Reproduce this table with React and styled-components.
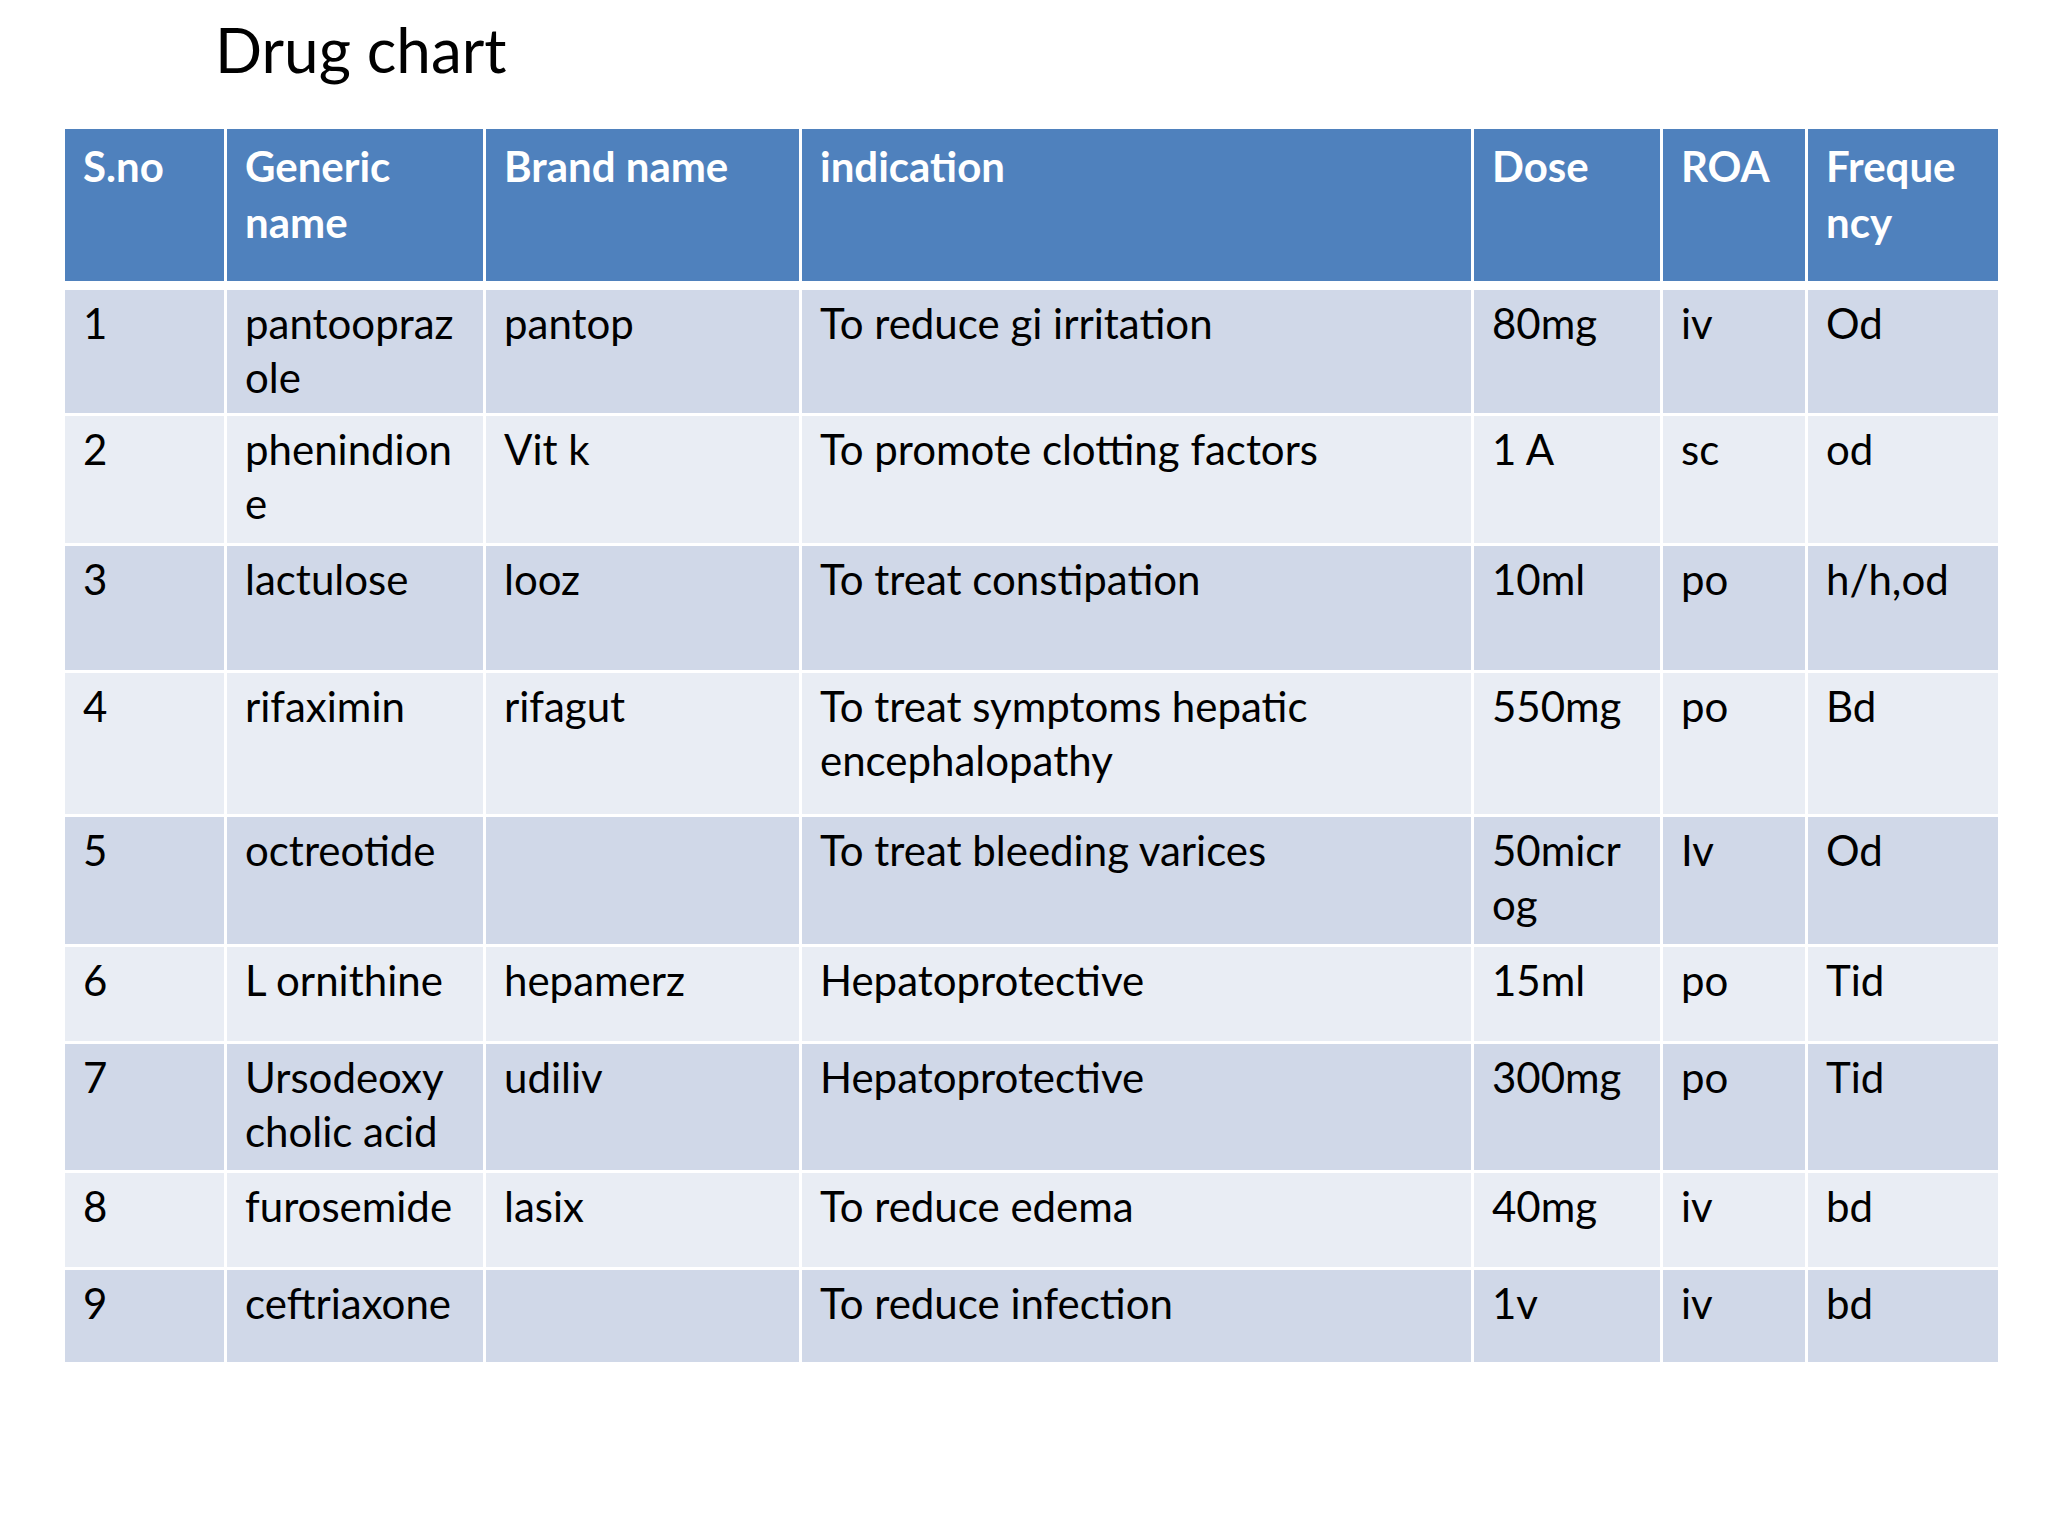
import React from "react";
import styled, { createGlobalStyle } from "styled-components";

const GlobalStyle = createGlobalStyle`
  body {
    margin: 0;
    background: #ffffff;
    font-family: Lato, "Open Sans", "Liberation Sans", sans-serif;
  }
`;

const columns = [
  { title: ["S.no"], width: 159 },
  { title: ["Generic", "name"], width: 256 },
  { title: ["Brand name"], width: 313 },
  { title: ["indication"], width: 669 },
  { title: ["Dose"], width: 186 },
  { title: ["ROA"], width: 142 },
  { title: ["Freque", "ncy"], width: 190 },
];

const rows = [
  { h: 123, cells: ["1", ["pantoopraz", "ole"], "pantop", "To reduce gi irritation", "80mg", "iv", "Od"] },
  { h: 127, cells: ["2", ["phenindion", "e"], "Vit k", "To promote clotting factors", "1 A", "sc", "od"] },
  { h: 124, cells: ["3", "lactulose", "looz", "To treat constipation", "10ml", "po", "h/h,od"] },
  { h: 141, cells: ["4", "rifaximin", "rifagut", ["To treat symptoms hepatic", "encephalopathy"], "550mg", "po", "Bd"] },
  { h: 127, cells: ["5", "octreotide", "", "To treat bleeding varices", ["50micr", "og"], "Iv", "Od"] },
  { h: 94, cells: ["6", "L ornithine", "hepamerz", "Hepatoprotective", "15ml", "po", "Tid"] },
  { h: 126, cells: ["7", ["Ursodeoxy", "cholic acid"], "udiliv", "Hepatoprotective", "300mg", "po", "Tid"] },
  { h: 94, cells: ["8", "furosemide", "lasix", "To reduce edema", "40mg", "iv", "bd"] },
  { h: 92, cells: ["9", "ceftriaxone", "", "To reduce infection", "1v", "iv", "bd"] },
];

const gridCols = columns.map((c) => `${c.width}px`).join(" ");

const Page = styled.div`
  padding: 12px 0 0 65px;
  width: 1933px;
`;

const Title = styled.h1`
  margin: 0 0 43px 150px;
  font-size: 62px;
  line-height: 74px;
  font-weight: 400;
  color: #000;
`;

const Table = styled.div`
  display: flex;
  flex-direction: column;
  gap: 3px;
`;

const Row = styled.div`
  display: grid;
  grid-template-columns: ${gridCols};
  column-gap: 3px;
  height: ${(p) => p.$h}px;
  margin-bottom: ${(p) => (p.$head ? 6 : 0)}px;
`;

const Cell = styled.div`
  padding: ${(p) => (p.$head ? "9px" : "6px")} 0 0 18px;
  background: ${(p) => (p.$head ? "#4f81bd" : p.$odd ? "#d0d8e8" : "#e9edf4")};
  color: ${(p) => (p.$head ? "#ffffff" : "#000000")};
  font-size: 42px;
  font-weight: ${(p) => (p.$head ? 700 : 400)};
  line-height: ${(p) => (p.$head ? 56 : 54)}px;
`;

const Line = styled.span`
  display: block;
  white-space: nowrap;
`;

const renderLines = (value) =>
  (Array.isArray(value) ? value : [value]).map((t, i) => <Line key={i}>{t}</Line>);

export default function App() {
  return (
    <>
      <GlobalStyle />
      <Page>
        <Title>Drug chart</Title>
        <Table>
          <Row $h={152} $head>
            {columns.map((c, i) => (
              <Cell key={i} $head>
                {renderLines(c.title)}
              </Cell>
            ))}
          </Row>
          {rows.map((r, ri) => (
            <Row key={ri} $h={r.h}>
              {r.cells.map((v, ci) => (
                <Cell key={ci} $odd={ri % 2 === 0}>
                  {renderLines(v)}
                </Cell>
              ))}
            </Row>
          ))}
        </Table>
      </Page>
    </>
  );
}
